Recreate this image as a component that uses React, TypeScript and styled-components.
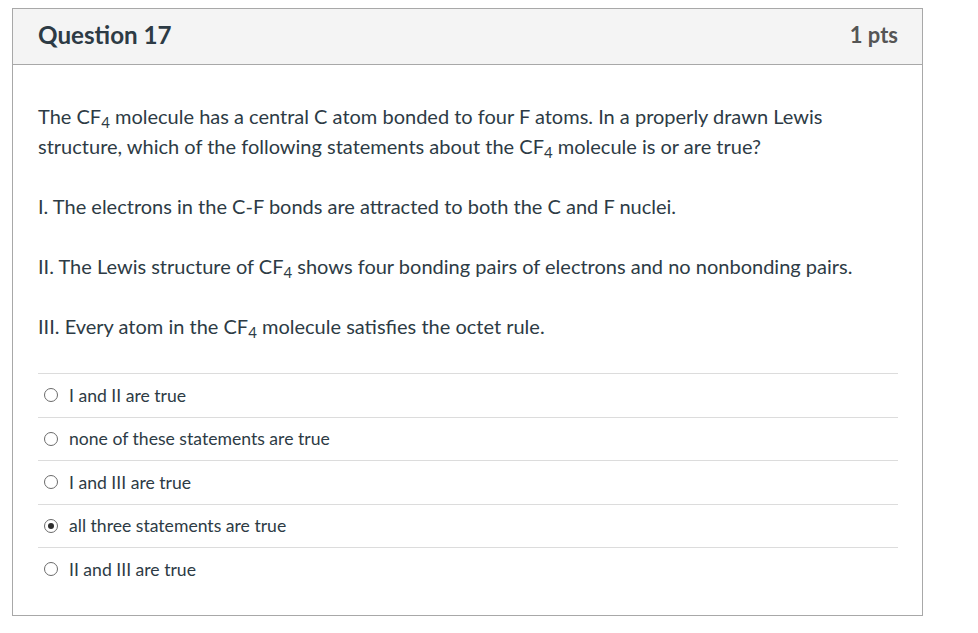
import React from "react";
import styled, { createGlobalStyle } from "styled-components";

const Global = createGlobalStyle`
  html, body { margin: 0; padding: 0; background: #fff; }
  body { font-family: Lato, "Noto Sans", "Liberation Sans", sans-serif; color: #2d3b45; }
`;

const Page = styled.div`
  padding: 8px 0 0 12px;
`;

const Card = styled.div`
  width: 909px;
  border: 1px solid #a8a8a8;
  background: #fff;
`;

const Header = styled.div`
  height: 56px;
  box-sizing: border-box;
  padding: 0 24px 4px 25px;
  background: #f4f4f4;
  border-bottom: 1px solid #a8a8a8;
  display: flex;
  align-items: center;
  justify-content: space-between;
`;

const Title = styled.h2`
  margin: 0;
  font-size: 24.2px;
  font-weight: 700;
  color: #2d3b45;
`;

const Points = styled.span`
  font-size: 22px;
  font-weight: 700;
  color: #555;
`;

const Body = styled.div`
  padding: 36px 24px 24px 25px;
`;

const Para = styled.p`
  margin: 0 0 30px;
  font-size: 20px;
  line-height: 30px;
`;

const Answers = styled.div`
  margin-top: 32px;
  display: flex;
  flex-direction: column;
`;

const Row = styled.label`
  display: flex;
  align-items: center;
  height: 43.5px;
  box-sizing: border-box;
  border-top: 1px solid #dcdcdc;
  font-size: 17.6px;
`;

const Radio = styled.span<{ $checked?: boolean }>`
  width: 14px;
  height: 14px;
  box-sizing: border-box;
  border: 1.5px solid #6b6b6b;
  border-radius: 50%;
  margin: 0 11px 0 6px;
  display: flex;
  align-items: center;
  justify-content: center;
  &::after {
    content: "";
    display: ${(p) => (p.$checked ? "block" : "none")};
    width: 6px;
    height: 6px;
    border-radius: 50%;
    background: #2d2d2d;
  }
`;

const Sub = styled.sub`
  font-size: 0.75em;
  vertical-align: -0.25em;
  line-height: 0;
`;

const CF4 = () => (
  <>
    CF<Sub>4</Sub>
  </>
);

const answers = [
  { text: "I and II are true" },
  { text: "none of these statements are true" },
  { text: "I and III are true" },
  { text: "all three statements are true", checked: true },
  { text: "II and III are true" },
];

export default function App() {
  return (
    <>
      <Global />
      <Page>
        <Card>
          <Header>
            <Title>Question 17</Title>
            <Points>1 pts</Points>
          </Header>
          <Body>
            <Para>
              The <CF4 /> molecule has a central C atom bonded to four F atoms. In a properly drawn Lewis
              <br />
              structure, which of the following statements about the <CF4 /> molecule is or are true?
            </Para>
            <Para>I. The electrons in the C-F bonds are attracted to both the C and F nuclei.</Para>
            <Para>
              II. The Lewis structure of <CF4 /> shows four bonding pairs of electrons and no nonbonding pairs.
            </Para>
            <Para style={{ marginBottom: 0 }}>
              III. Every atom in the <CF4 /> molecule satisfies the octet rule.
            </Para>
            <Answers>
              {answers.map((a) => (
                <Row key={a.text}>
                  <Radio $checked={a.checked} />
                  {a.text}
                </Row>
              ))}
            </Answers>
          </Body>
        </Card>
      </Page>
    </>
  );
}
